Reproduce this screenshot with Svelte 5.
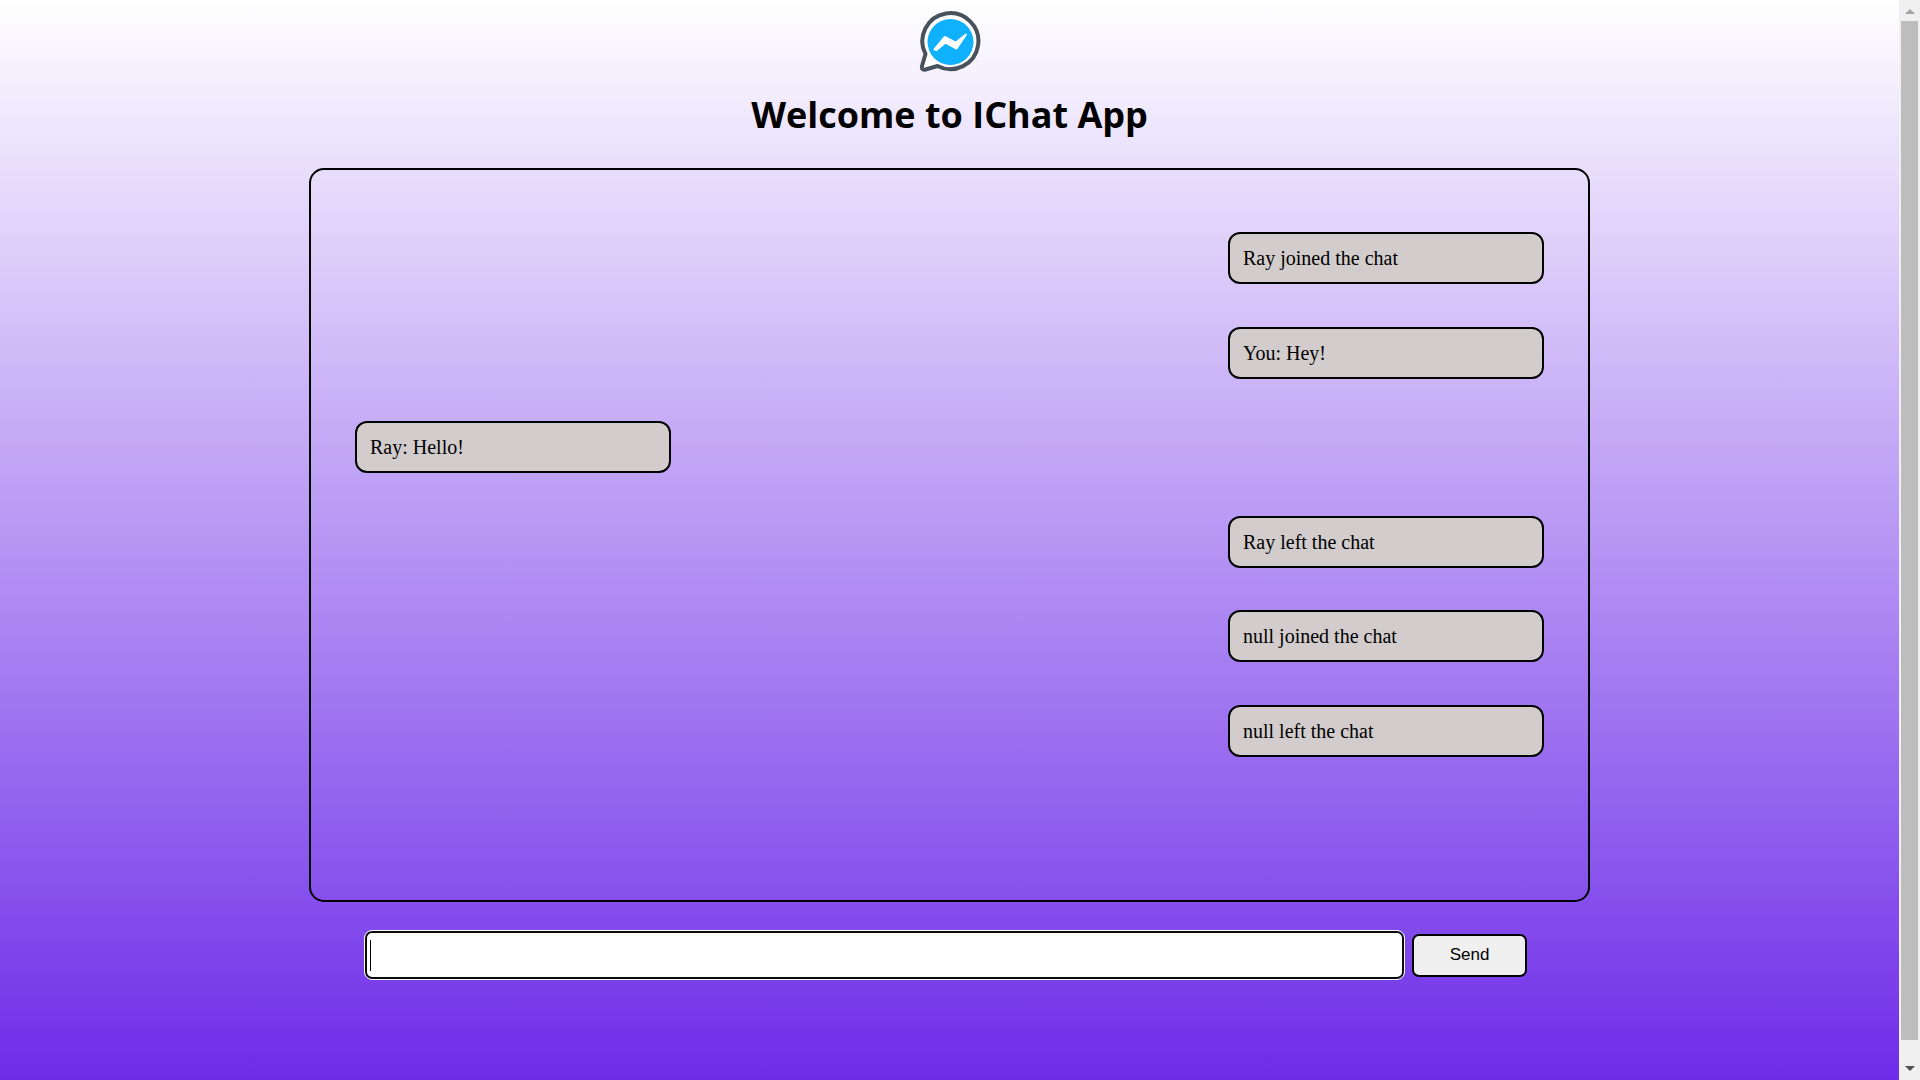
<script>
  const messages = [
    { text: "Ray joined the chat", side: "right" },
    { text: "You: Hey!", side: "right" },
    { text: "Ray: Hello!", side: "left" },
    { text: "Ray left the chat", side: "right" },
    { text: "null joined the chat", side: "right" },
    { text: "null left the chat", side: "right" },
  ];
</script>

<div class="page">
  <nav class="logo-row">
    <svg class="logo" width="62" height="62" viewBox="0 0 62 62" aria-hidden="true">
      <path
        d="M6.5 44 L3 56 Q2.3 60.5 6.5 59.5 L18.5 56 A28 28 0 1 0 6.5 44 Z"
        fill="#fff"
        stroke="#48525c"
        stroke-width="4"
        stroke-linejoin="round"
      />
      <circle cx="31.5" cy="32" r="23" fill="#0fb0fc" />
      <path
        d="M15.5 39.5 L25.8 27 L36.5 32.7 L47 24.5 L37.5 38.5 L26.5 32.5 L17.5 40 Z"
        fill="#fff"
        stroke="#fff"
        stroke-width="2"
        stroke-linejoin="round"
      />
    </svg>
  </nav>
  <h1>Welcome to IChat App</h1>

  <div class="container">
    {#each messages as msg}
      <div class="message {msg.side}">{msg.text}</div>
    {/each}
  </div>

  <form class="send-form" onsubmit={(e) => e.preventDefault()}>
    <div class="input-wrap">
      <span class="caret"></span>
      <input type="text" aria-label="Message" />
    </div>
    <button type="submit">Send</button>
  </form>
</div>

<div class="scrollbar" aria-hidden="true">
  <span class="arrow up"></span>
  <span class="thumb"></span>
  <span class="arrow down"></span>
</div>

<style>
  :global(html),
  :global(body) {
    margin: 0;
    overflow: hidden;
  }

  .page {
    box-sizing: border-box;
    width: 1899px;
    height: 1100px;
    padding-top: 10px;
    background: linear-gradient(180deg, #ffffff 0%, #6b28e8 100%);
    display: flex;
    flex-direction: column;
    align-items: center;
  }

  .logo-row {
    height: 62px;
    display: flex;
    justify-content: center;
  }

  h1 {
    margin: 18px 0 0;
    font-family: "Open Sans", sans-serif;
    font-size: 36px;
    font-weight: 700;
    line-height: 49px;
    color: #000;
    text-align: center;
  }

  .container {
    box-sizing: border-box;
    width: 1281px;
    height: 734px;
    margin-top: 29px;
    padding: 62px 44px 0;
    border: 2px solid #000;
    border-radius: 15px;
    display: flex;
    flex-direction: column;
    gap: 42.5px;
  }

  .message {
    box-sizing: border-box;
    width: 316px;
    height: 52px;
    padding: 0 13px;
    background: #d2cccc;
    border: 2px solid #000;
    border-radius: 12px;
    font-family: "Liberation Serif", serif;
    font-size: 20px;
    line-height: 48px;
    color: #000;
  }

  .message.right {
    align-self: flex-end;
  }

  .message.left {
    align-self: flex-start;
  }

  .send-form {
    width: 1171px;
    margin-top: 28px;
    display: flex;
    align-items: center;
    gap: 7px;
  }

  .input-wrap {
    position: relative;
    box-sizing: border-box;
    width: 1041px;
    height: 50px;
    padding: 1px;
  }

  .input-wrap input {
    display: block;
    box-sizing: border-box;
    width: 100%;
    height: 100%;
    background: #fff;
    border: 2px solid #0b0b0b;
    border-radius: 7px;
    outline: 1px solid #fff;
    outline-offset: 0;
  }

  .caret {
    position: absolute;
    left: 6px;
    top: 10px;
    width: 1px;
    height: 31px;
    background: #000;
    z-index: 1;
  }

  button {
    box-sizing: border-box;
    width: 115px;
    height: 43px;
    padding: 0 0 1px;
    background: #efefef;
    border: 2px solid #000;
    border-radius: 7px;
    font-family: "Liberation Sans", sans-serif;
    font-size: 17px;
    color: #000;
  }

  .scrollbar {
    position: fixed;
    top: 0;
    right: 0;
    width: 21px;
    height: 1080px;
    background: #f0f0f0;
    display: flex;
    flex-direction: column;
    align-items: center;
  }

  .arrow {
    width: 0;
    height: 0;
    border-left: 5px solid transparent;
    border-right: 5px solid transparent;
  }

  .arrow.up {
    margin-top: 9px;
    border-bottom: 5px solid #a3a3a3;
  }

  .arrow.down {
    margin-top: 26px;
    border-top: 5px solid #505050;
  }

  .thumb {
    width: 17px;
    height: 1019px;
    margin-top: 7px;
    background: #bdbdbd;
  }
</style>
